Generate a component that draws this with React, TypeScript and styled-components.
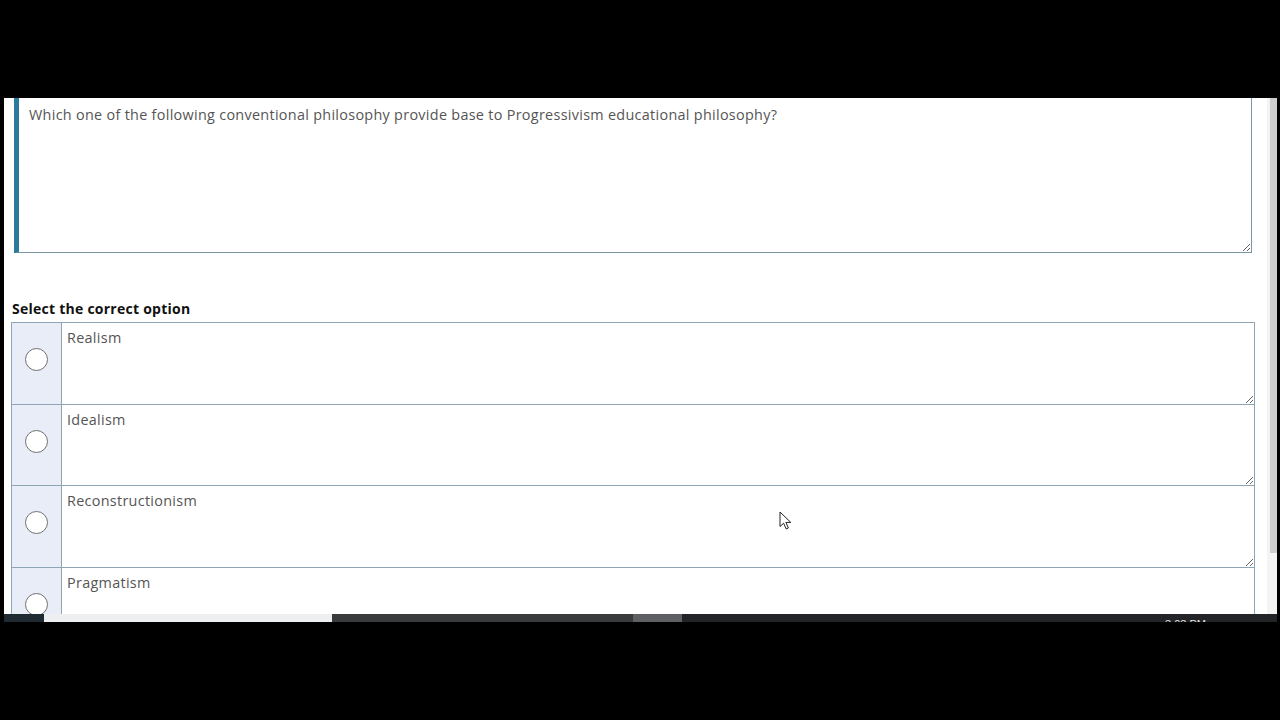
import React from "react"
import styled, { createGlobalStyle } from "styled-components"

const GlobalStyle = createGlobalStyle`
    html, body {
        margin: 0;
        padding: 0;
        background: #000;
        width: 1280px;
        height: 720px;
        overflow: hidden;
    }
`

const options = ["Realism", "Idealism", "Reconstructionism", "Pragmatism"]

const Option: React.FunctionComponent<{ text: string }> = ({ text }) => {
    return (
        <OptionRow>
            <RadioCell>
                <Radio />
            </RadioCell>
            <OptionText readOnly defaultValue={text} />
        </OptionRow>
    )
}

const Cursor = () => (
    <CursorIcon width="14" height="20" viewBox="0 0 14 20">
        <path d="M1 1 L1 15.5 L4.6 12.2 L7.2 18 L9.4 17 L6.9 11.4 L11.8 11.4 Z" fill="#fff" stroke="#222" strokeWidth="1" strokeLinejoin="round" />
    </CursorIcon>
)

export default function App() {
    return (
        <>
            <GlobalStyle />
            <Frame>
                <Screen>
                    <Page>
                        <Question
                            readOnly
                            defaultValue="Which one of the following conventional philosophy provide base to Progressivism educational philosophy?"
                        />
                        <Label>Select the correct option</Label>
                        <OptionList>
                            {options.map(o => <Option key={o} text={o} />)}
                        </OptionList>
                        <Cursor />
                    </Page>
                    <Scrollbar>
                        <Thumb />
                    </Scrollbar>
                </Screen>
                <Taskbar>
                    <TaskSeg width={40} color="#1f2a33" />
                    <TaskSeg width={288} color="#eeeff1" />
                    <TaskSeg width={301} color="#3a3b3d" />
                    <TaskSeg width={49} color="#5f6063" />
                    <TaskRest>
                        <Clock>3:03 PM</Clock>
                    </TaskRest>
                </Taskbar>
            </Frame>
        </>
    )
}

const Frame = styled.div`
    padding: 98px 0 0 4px;
    width: 1273px;
`

const Screen = styled.div`
    display: flex;
    height: 516px;
    background: #fff;
    overflow: hidden;
`

const Page = styled.div`
    position: relative;
    flex: 1;
    padding: 0 12px 0 7px;
    font-family: "Open Sans", "Liberation Sans", sans-serif;
`

const Question = styled.textarea`
    display: block;
    box-sizing: border-box;
    width: calc(100% - 3px - 3px);
    margin-left: 3px;
    height: 155px;
    border: 1px solid #7c98a6;
    border-top: none;
    border-left: 5px solid #2b7b9c;
    padding: 6px 10px;
    font-family: inherit;
    font-size: 14.4px;
    letter-spacing: 0.3px;
    line-height: 21px;
    color: #555;
    resize: vertical;
    outline: none;
    background: #fff;
`

const Label = styled.div`
    margin: 46px 0 3px 1px;
    font-size: 14px;
    line-height: 20px;
    font-weight: 700;
    letter-spacing: 0.25px;
    color: #111;
`

const OptionList = styled.div`
    border: 1px solid #8fa5b3;
    border-bottom: none;
`

const OptionRow = styled.div`
    box-sizing: border-box;
    display: grid;
    grid-template-columns: 50px 1fr;
    height: 81.5px;
    border-bottom: 1px solid #8fa5b3;
`

const RadioCell = styled.div`
    display: flex;
    justify-content: center;
    padding-top: 25px;
    background: #e8edf7;
    border-right: 1px solid #8fa5b3;
`

const Radio = styled.span`
    box-sizing: border-box;
    width: 23px;
    height: 23px;
    border: 1px solid #707070;
    border-radius: 50%;
    background: #fff;
`

const OptionText = styled.textarea`
    box-sizing: border-box;
    height: 100%;
    width: 100%;
    border: none;
    padding: 5px 5px;
    font-family: "Open Sans", "Liberation Sans", sans-serif;
    font-size: 14.4px;
    letter-spacing: 0.3px;
    line-height: 20px;
    color: #555;
    resize: vertical;
    outline: none;
    background: #fff;
`

const CursorIcon = styled.svg`
    position: absolute;
    left: 775px;
    top: 413px;
`

const Scrollbar = styled.div`
    width: 10px;
    background: #f4f4f4;
    display: flex;
    justify-content: flex-end;
`

const Thumb = styled.div`
    width: 7px;
    height: 455px;
    background: #cdcdcd;
`

const Taskbar = styled.div`
    display: flex;
    height: 8px;
    overflow: hidden;
`

const TaskSeg = styled.div<{ width: number, color: string }>`
    width: ${props => props.width}px;
    background: ${props => props.color};
`

const TaskRest = styled.div`
    flex: 1;
    background: #232427;
    padding-left: 483px;
`

const Clock = styled.span`
    display: block;
    padding-top: 4px;
    font-family: "Liberation Sans", sans-serif;
    font-size: 11px;
    color: #e6e6e6;
`
